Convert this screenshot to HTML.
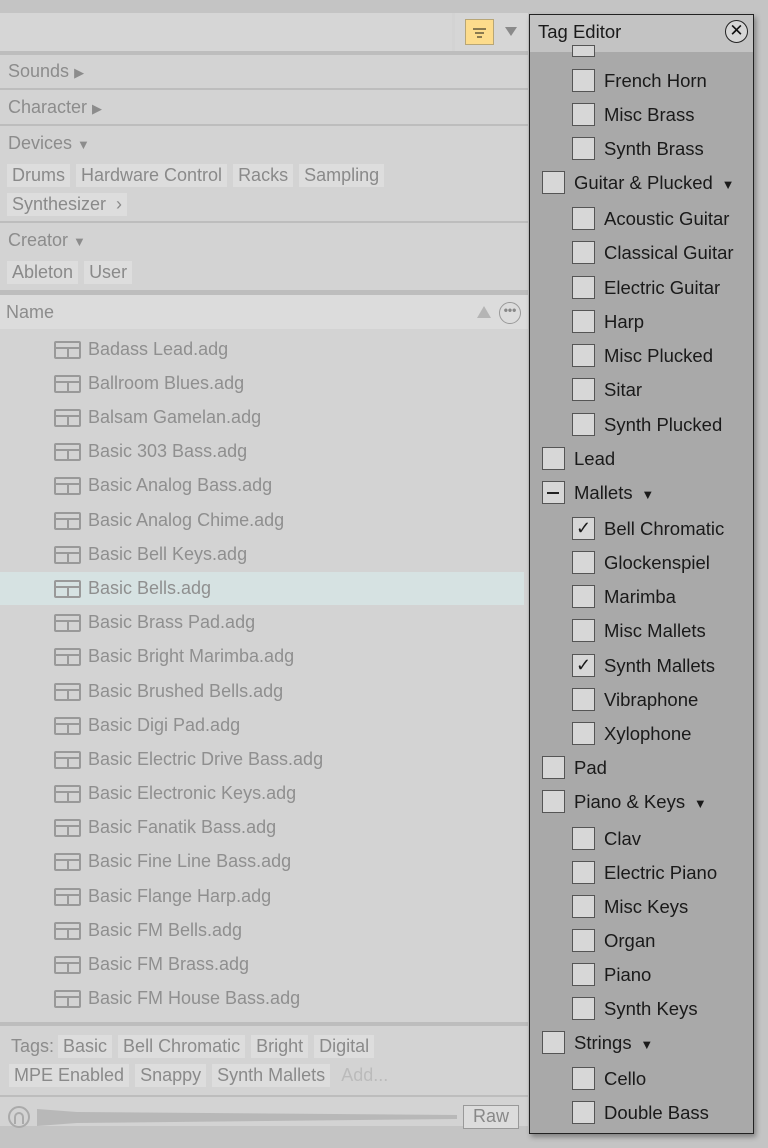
<!DOCTYPE html>
<html><head><meta charset="utf-8"><style>
*{margin:0;padding:0;box-sizing:border-box}
body{width:768px;height:1148px;background:#c4c4c4;font-family:"Liberation Sans",sans-serif;position:relative;overflow:hidden}
.a{position:absolute}
.lp{left:0;top:13px;width:528px;height:1113px;background:#d3d3d3}
.hd{color:#8c8c8c;font-size:18px}
.ln{height:2px;background:#bdbdbd;left:0;width:528px}
.tr{display:flex;gap:6px}
.tg{background:#dddddd;color:#8a8a8a;font-size:18px;height:23px;line-height:23px;padding:0 5px;white-space:nowrap}
.row{left:0;width:524px;height:34px;color:#8f8f8f;font-size:18px;line-height:34px}
.row .ic{position:absolute;left:54px;top:9px;width:27px;height:18px;border:2px solid #999;border-radius:2px}
.row .ic:before{content:"";position:absolute;left:0;right:0;top:4px;height:2px;background:#999}
.row .ic:after{content:"";position:absolute;left:10.5px;top:5px;bottom:0;width:2px;background:#999}
.row span{position:absolute;left:88px}
.te{left:529px;top:14px;width:225px;height:1120px;background:#a9a9a9;border:1.5px solid #222;box-shadow:2px 3px 5px rgba(0,0,0,.35);overflow:hidden}
.teh{left:0;top:0;width:100%;height:37px;background:#c3c3c3}
.it{font-size:18.5px;color:#1a1a1a;white-space:nowrap;height:24px;line-height:24px}
.cb{display:inline-block;width:23px;height:23px;border:1.5px solid #555;background:#d7d7d7;vertical-align:top;margin-right:9px;position:relative}
.ar{font-size:13px}
</style></head><body>
<div class="a lp"></div>
<div class="a" style="left:0;top:13px;width:452px;height:38px;background:#d6d6d6"></div>
<div class="a" style="left:455px;top:13px;width:73px;height:38px;background:#d6d6d6"></div>
<div class="a" style="left:465px;top:19px;width:29px;height:26px;background:#fddc8c;border:1.5px solid #b8a676"></div>
<div class="a" style="left:473px;top:28px;width:13px;height:1.5px;background:#8a7a50"></div>
<div class="a" style="left:475px;top:32px;width:9px;height:1.5px;background:#8a7a50"></div>
<div class="a" style="left:477px;top:36px;width:5px;height:1.5px;background:#8a7a50"></div>
<div class="a" style="left:505px;top:27px;width:0;height:0;border-left:6px solid transparent;border-right:6px solid transparent;border-top:9px solid #8a8a8a"></div>
<div class="a ln" style="top:51px;height:4px"></div>
<div class="a hd" style="left:8px;top:61px">Sounds <span class="ar">▶</span></div>
<div class="a ln" style="top:88px"></div>
<div class="a hd" style="left:8px;top:97px">Character <span class="ar">▶</span></div>
<div class="a ln" style="top:124px"></div>
<div class="a hd" style="left:8px;top:133px">Devices <span class="ar">▼</span></div>
<div class="a tr" style="left:7px;top:164px"><div class="tg">Drums</div><div class="tg">Hardware Control</div><div class="tg">Racks</div><div class="tg">Sampling</div></div>
<div class="a tr" style="left:7px;top:193px"><div class="tg">Synthesizer &nbsp;›</div></div>
<div class="a ln" style="top:221px"></div>
<div class="a hd" style="left:8px;top:230px">Creator <span class="ar">▼</span></div>
<div class="a tr" style="left:7px;top:261px"><div class="tg">Ableton</div><div class="tg">User</div></div>
<div class="a ln" style="top:290px;height:5px"></div>
<div class="a" style="left:0;top:295px;width:528px;height:34px;background:#dcdcdc"></div>
<div class="a hd" style="left:6px;top:302px">Name</div>
<div class="a" style="left:477px;top:306px;border-left:7px solid transparent;border-right:7px solid transparent;border-bottom:12px solid #b5b5b5"></div>
<div class="a" style="left:499px;top:302px;width:22px;height:22px;border:1.5px solid #999;border-radius:50%;color:#888;font-size:12px;line-height:14px;text-align:center;font-weight:bold">•••</div>
<div class="a" style="left:0;top:572px;width:524px;height:33px;background:#d6e2e2"></div>
<div class="a row" style="top:332px"><i class="ic"></i><span>Badass Lead.adg</span></div>
<div class="a row" style="top:366px"><i class="ic"></i><span>Ballroom Blues.adg</span></div>
<div class="a row" style="top:400px"><i class="ic"></i><span>Balsam Gamelan.adg</span></div>
<div class="a row" style="top:434px"><i class="ic"></i><span>Basic 303 Bass.adg</span></div>
<div class="a row" style="top:468px"><i class="ic"></i><span>Basic Analog Bass.adg</span></div>
<div class="a row" style="top:503px"><i class="ic"></i><span>Basic Analog Chime.adg</span></div>
<div class="a row" style="top:537px"><i class="ic"></i><span>Basic Bell Keys.adg</span></div>
<div class="a row" style="top:571px"><i class="ic"></i><span>Basic Bells.adg</span></div>
<div class="a row" style="top:605px"><i class="ic"></i><span>Basic Brass Pad.adg</span></div>
<div class="a row" style="top:639px"><i class="ic"></i><span>Basic Bright Marimba.adg</span></div>
<div class="a row" style="top:674px"><i class="ic"></i><span>Basic Brushed Bells.adg</span></div>
<div class="a row" style="top:708px"><i class="ic"></i><span>Basic Digi Pad.adg</span></div>
<div class="a row" style="top:742px"><i class="ic"></i><span>Basic Electric Drive Bass.adg</span></div>
<div class="a row" style="top:776px"><i class="ic"></i><span>Basic Electronic Keys.adg</span></div>
<div class="a row" style="top:810px"><i class="ic"></i><span>Basic Fanatik Bass.adg</span></div>
<div class="a row" style="top:844px"><i class="ic"></i><span>Basic Fine Line Bass.adg</span></div>
<div class="a row" style="top:879px"><i class="ic"></i><span>Basic Flange Harp.adg</span></div>
<div class="a row" style="top:913px"><i class="ic"></i><span>Basic FM Bells.adg</span></div>
<div class="a row" style="top:947px"><i class="ic"></i><span>Basic FM Brass.adg</span></div>
<div class="a row" style="top:981px"><i class="ic"></i><span>Basic FM House Bass.adg</span></div>
<div class="a ln" style="top:1022px;height:4px"></div>
<div class="a tr" style="left:11px;top:1035px;align-items:center"><div class="hd" style="margin-right:-2px">Tags:</div><div class="tg">Basic</div><div class="tg">Bell Chromatic</div><div class="tg">Bright</div><div class="tg">Digital</div></div>
<div class="a tr" style="left:9px;top:1064px"><div class="tg">MPE Enabled</div><div class="tg">Snappy</div><div class="tg">Synth Mallets</div><div class="tg" style="background:none;color:#bbb">Add...</div></div>
<div class="a ln" style="top:1095px"></div>
<div class="a" style="left:8px;top:1106px;width:22px;height:22px;border:2px solid #aaa;border-radius:50%"></div>
<div class="a" style="left:14px;top:1112px;width:10px;height:12px;border:2px solid #aaa;border-bottom:none;border-radius:6px 6px 0 0"></div>
<svg class="a" style="left:37px;top:1106px" width="420" height="22"><path d="M0 3 L40 6 L420 9 L420 13 L40 17 L0 20Z" fill="#b8b8b8"/></svg>
<div class="a" style="left:463px;top:1105px;width:56px;height:24px;border:1.5px solid #999;background:#dcdcdc;color:#888;font-size:18px;text-align:center;line-height:21px">Raw</div>

<div class="a te">
<div class="a teh"></div>
<div class="a" style="left:8px;top:6px;font-size:18.5px;color:#1a1a1a">Tag Editor</div>
<div class="a" style="left:195px;top:5px;width:23px;height:23px;border:1.5px solid #222;border-radius:50%;background:#d6d6d6;font-size:17px;line-height:19px;text-align:center;color:#111">✕</div>
<div class="a" style="left:42px;top:30px;width:23px;height:12px;border:1.5px solid #555;background:#d7d7d7"></div>
<div class="a it" style="left:42px;top:54px"><i class="cb"></i>French Horn</div>
<div class="a it" style="left:42px;top:88px"><i class="cb"></i>Misc Brass</div>
<div class="a it" style="left:42px;top:122px"><i class="cb"></i>Synth Brass</div>
<div class="a it" style="left:12px;top:156px"><i class="cb"></i>Guitar &amp; Plucked <span class="ar">&nbsp;▼</span></div>
<div class="a it" style="left:42px;top:192px"><i class="cb"></i>Acoustic Guitar</div>
<div class="a it" style="left:42px;top:226px"><i class="cb"></i>Classical Guitar</div>
<div class="a it" style="left:42px;top:261px"><i class="cb"></i>Electric Guitar</div>
<div class="a it" style="left:42px;top:295px"><i class="cb"></i>Harp</div>
<div class="a it" style="left:42px;top:329px"><i class="cb"></i>Misc Plucked</div>
<div class="a it" style="left:42px;top:363px"><i class="cb"></i>Sitar</div>
<div class="a it" style="left:42px;top:398px"><i class="cb"></i>Synth Plucked</div>
<div class="a it" style="left:12px;top:432px"><i class="cb"></i>Lead</div>
<div class="a it" style="left:12px;top:466px"><i class="cb"><b style="position:absolute;left:4px;top:10px;width:12px;height:1.5px;background:#222"></b></i>Mallets <span class="ar">&nbsp;▼</span></div>
<div class="a it" style="left:42px;top:502px"><i class="cb" style="font-style:normal;font-size:18px;line-height:20px;text-align:center">✓</i>Bell Chromatic</div>
<div class="a it" style="left:42px;top:536px"><i class="cb"></i>Glockenspiel</div>
<div class="a it" style="left:42px;top:570px"><i class="cb"></i>Marimba</div>
<div class="a it" style="left:42px;top:604px"><i class="cb"></i>Misc Mallets</div>
<div class="a it" style="left:42px;top:639px"><i class="cb" style="font-style:normal;font-size:18px;line-height:20px;text-align:center">✓</i>Synth Mallets</div>
<div class="a it" style="left:42px;top:673px"><i class="cb"></i>Vibraphone</div>
<div class="a it" style="left:42px;top:707px"><i class="cb"></i>Xylophone</div>
<div class="a it" style="left:12px;top:741px"><i class="cb"></i>Pad</div>
<div class="a it" style="left:12px;top:775px"><i class="cb"></i>Piano &amp; Keys <span class="ar">&nbsp;▼</span></div>
<div class="a it" style="left:42px;top:812px"><i class="cb"></i>Clav</div>
<div class="a it" style="left:42px;top:846px"><i class="cb"></i>Electric Piano</div>
<div class="a it" style="left:42px;top:880px"><i class="cb"></i>Misc Keys</div>
<div class="a it" style="left:42px;top:914px"><i class="cb"></i>Organ</div>
<div class="a it" style="left:42px;top:948px"><i class="cb"></i>Piano</div>
<div class="a it" style="left:42px;top:982px"><i class="cb"></i>Synth Keys</div>
<div class="a it" style="left:12px;top:1016px"><i class="cb"></i>Strings <span class="ar">&nbsp;▼</span></div>
<div class="a it" style="left:42px;top:1052px"><i class="cb"></i>Cello</div>
<div class="a it" style="left:42px;top:1086px"><i class="cb"></i>Double Bass</div>
</div>
</body></html>
